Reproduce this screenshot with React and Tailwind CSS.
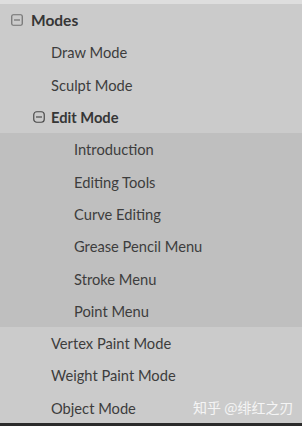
const rows = [
  { label: 'Draw Mode', level: 1 },
  { label: 'Sculpt Mode', level: 1 },
]

const editItems = [
  'Introduction',
  'Editing Tools',
  'Curve Editing',
  'Grease Pencil Menu',
  'Stroke Menu',
  'Point Menu',
]

const afterItems = ['Vertex Paint Mode', 'Weight Paint Mode', 'Object Mode']

function MinusBox({ round }) {
  return (
    <svg width="12" height="12" viewBox="0 0 12 12" className="shrink-0">
      <rect
        x="0.75"
        y="0.75"
        width="10.5"
        height="10.5"
        rx={round ? 3 : 1.5}
        fill="none"
        stroke={round ? '#4a4a4a' : '#707070'}
        strokeWidth="1.2"
      />
      <line x1="3" y1="6" x2="9" y2="6" stroke={round ? '#4a4a4a' : '#707070'} strokeWidth="1.2" />
    </svg>
  )
}

export default function App() {
  return (
    <div
      className="relative w-[302px] h-[426px] overflow-hidden bg-[#cbcbcb] text-[#3d3d3d]"
      style={{ fontFamily: 'Lato, "Noto Sans", sans-serif' }}
    >
      <div className="h-[4px] bg-[#dedede]" />

      <div className="flex items-center h-[32.3px] pl-[11px] gap-[8px]">
        <MinusBox />
        <span className="text-[15.5px] font-bold text-[#363636]">Modes</span>
      </div>

      {rows.map((r) => (
        <div key={r.label} className="flex items-center h-[32.3px] pl-[51px] text-[14.7px]">
          {r.label}
        </div>
      ))}

      <div className="flex items-center h-[32.3px] pl-[33px] gap-[6px]">
        <MinusBox round />
        <span className="text-[14.7px] font-bold text-[#363636]">Edit Mode</span>
      </div>

      <div className="bg-[#bfbfbf]">
        {editItems.map((label) => (
          <div key={label} className="flex items-center h-[32.3px] pl-[74px] text-[14.7px]">
            {label}
          </div>
        ))}
      </div>

      {afterItems.map((label) => (
        <div key={label} className="flex items-center h-[32.3px] pl-[51px] text-[14.7px]">
          {label}
        </div>
      ))}

      <div className="absolute left-0 right-0 bottom-0 h-[3px] bg-[#2b2b2b]" />

      <div
        className="absolute left-[193px] top-[397px] text-[14px] text-white/80"
        style={{ fontFamily: '"Noto Sans CJK SC", sans-serif' }}
      >
        知乎 @绯红之刃
      </div>
    </div>
  )
}
